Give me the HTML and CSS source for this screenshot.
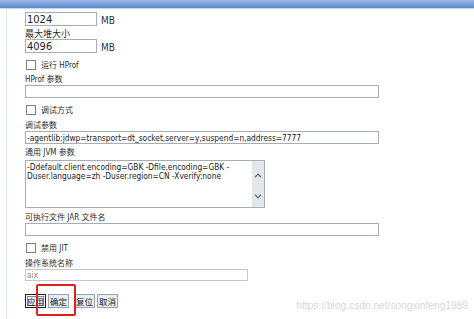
FILE: index.html
```html
<!DOCTYPE html>
<html lang="zh">
<head>
    <meta charset="UTF-8">
    <title>Java 虚拟机</title>
    <link rel="stylesheet" href="styles.css">
</head>
<body>
    <div class="topbar"></div>
    <div class="page">
        <form class="jvm-form">
            <div class="row">
                <input type="text" class="num-input" value="1024">
                <span class="unit">MB</span>
            </div>

            <label class="field-label big-label gap-3">最大堆大小</label>
            <div class="row">
                <input type="text" class="num-input" value="4096">
                <span class="unit">MB</span>
            </div>

            <div class="check-row">
                <span class="box"></span>
                <span>运行 HProf</span>
            </div>

            <label class="field-label gap-5">HProf 参数</label>
            <input type="text" class="wide-input">

            <div class="check-row">
                <span class="box"></span>
                <span>调试方式</span>
            </div>

            <label class="field-label gap-6">调试参数</label>
            <input type="text" class="wide-input" value="-agentlib:jdwp=transport=dt_socket,server=y,suspend=n,address=7777">

            <label class="field-label gap-4">通用 JVM 参数</label>
            <div class="textarea">
                <div class="textarea-text">-Ddefault.client.encoding=GBK -Dfile.encoding=GBK -<br>Duser.language=zh -Duser.region=CN -Xverify:none</div>
                <div class="scrollbar">
                    <svg width="8" height="5" viewBox="0 0 8 5"><path d="M1 4.2 L4 1.2 L7 4.2" fill="none" stroke="#6a7484" stroke-width="1.3"/></svg>
                    <svg width="8" height="5" viewBox="0 0 8 5"><path d="M1 0.8 L4 3.8 L7 0.8" fill="none" stroke="#6a7484" stroke-width="1.3"/></svg>
                </div>
            </div>

            <label class="field-label gap-5">可执行文件 JAR 文件名</label>
            <input type="text" class="wide-input">

            <div class="check-row">
                <span class="box"></span>
                <span>禁用 JIT</span>
            </div>

            <label class="field-label gap-6">操作系统名称</label>
            <input type="text" class="os-input" value="aix">

            <div class="buttons">
                <button type="button" class="btn btn-focus">应用</button>
                <button type="button" class="btn">确定</button>
                <button type="button" class="btn">复位</button>
                <button type="button" class="btn">取消</button>
                <span class="highlight"></span>
            </div>
        </form>
        <div class="watermark">https://blog.csdn.net/songxinfeng1989</div>
    </div>
</body>
</html>
```

FILE: styles.css
```css
body {
    margin: 0;
    background: #fff;
    font-family: "DejaVu Sans Condensed", "Noto Sans CJK SC", sans-serif;
    font-size: 8px;
    color: #2a2a2a;
    width: 474px;
    height: 319px;
    overflow: hidden;
}
.topbar {
    height: 8px;
    background: linear-gradient(#9ab8e6, #5e88cf);
    border-bottom: 1px solid #c6d6ee;
}
.page {
    position: relative;
    margin-left: 6px;
    border-left: 1px solid #dde3ea;
    height: 310px;
}
.jvm-form {
    display: flex;
    flex-direction: column;
    align-items: flex-start;
    padding: 3px 0 0 18px;
}
input {
    font-family: inherit;
    font-size: 8.3px;
    color: #222;
    margin: 0;
    border: 1px solid #a6adb6;
    box-sizing: border-box;
    background: #fff;
    padding: 0 1px;
    outline: none;
}
.row {
    display: flex;
    align-items: center;
    gap: 4px;
    height: 14px;
}
.num-input {
    width: 72px;
    height: 14px;
    font-size: 11px;
}
.unit {
    font-size: 10px;
    color: #333;
    padding-top: 2px;
}
.field-label {
    line-height: 10px;
    height: 10px;
}
.big-label {
    font-size: 9px;
}
.gap-3 {
    margin-top: 3px;
}
.gap-4 {
    margin-top: 4px;
}
.gap-5 {
    margin-top: 5px;
}
.gap-6 {
    margin-top: 6px;
}
.check-row {
    display: flex;
    align-items: center;
    gap: 5px;
    margin: 6px 0 0 1px;
    height: 11px;
}
.box {
    width: 8px;
    height: 8px;
    border: 1px solid #7a7f86;
    background: #fff;
}
.wide-input {
    width: 354px;
    height: 13px;
}
.textarea {
    margin-top: 2px;
    width: 240px;
    height: 48px;
    border: 1px solid #a6adb6;
    box-sizing: border-box;
    display: flex;
}
.textarea-text {
    flex: 1;
    padding: 2px 1px 0;
    font-size: 8.3px;
    line-height: 9px;
    color: #222;
    white-space: nowrap;
    overflow: hidden;
}
.scrollbar {
    width: 12px;
    background: #e4e7ea;
    display: flex;
    flex-direction: column;
    align-items: center;
    justify-content: space-between;
    padding: 12px 0 8px;
}
.os-input {
    width: 223px;
    height: 12px;
    color: #888;
    border-color: #c2c6cc;
}
.buttons {
    position: relative;
    display: flex;
    gap: 2px;
    margin-top: 13px;
}
.btn {
    font-family: "Noto Sans CJK SC", sans-serif;
    font-size: 8.5px;
    height: 14px;
    padding: 0 1px;
    margin: 0;
    line-height: 12px;
    background: #e8edf4;
    border: 1px solid #9aa3ad;
    color: #222;
}
.btn-focus {
    border: 1px solid #222;
    box-shadow: inset 0 0 0 1px #fff, inset 0 0 0 2px #888;
}
.btn:nth-child(3) {
    margin-left: 3px;
}
.highlight {
    position: absolute;
    left: 11px;
    top: -10px;
    width: 36px;
    height: 28px;
    border: 2px solid #e02020;
    border-radius: 2px;
}
.watermark {
    position: absolute;
    right: 6px;
    bottom: 8px;
    font-family: "Liberation Sans", sans-serif;
    font-size: 10.2px;
    color: #d8d8d8;
}
```
